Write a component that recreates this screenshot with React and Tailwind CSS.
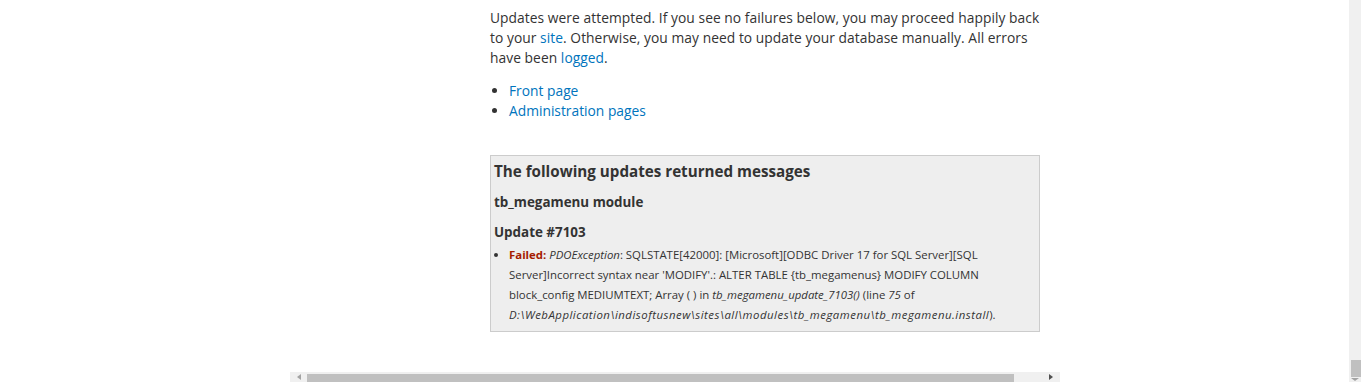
const link = "text-[#0074bd]";

export default function App() {
  return (
    <div className="flex h-[382px] w-full overflow-hidden bg-white font-['Open_Sans',sans-serif] text-[#333]">
      {/* page */}
      <div className="flex min-w-0 flex-1 flex-col">
        <div className="h-[372px] pl-[490px] pt-[8px]">
          <div className="w-[550px]">
            <p className="text-[13.8px] leading-[20px] tracking-[0.05px]">
              Updates were attempted. If you see no failures below, you may proceed happily back to your{" "}
              <a className={link}>site</a>. Otherwise, you may need to update your database manually. All errors have
              been <a className={link}>logged</a>.
            </p>
            <ul className="mt-[13px] list-disc pl-[19px] text-[13.8px] leading-[20px] marker:text-[#333]">
              <li>
                <a className={link}>Front page</a>
              </li>
              <li>
                <a className={link}>Administration pages</a>
              </li>
            </ul>

            <div className="mt-[34px] h-[177px] border border-[#ccc] bg-[#eee] px-[3px]">
              <h3 className="pt-[3px] text-[15.2px] font-bold leading-[24px]">The following updates returned messages</h3>
              <h4 className="mt-[9px] text-[13.4px] font-bold leading-[20px]">tb_megamenu module</h4>
              <h4 className="mt-[10px] text-[13.4px] font-bold leading-[20px]">Update #7103</h4>
              <ul className="mt-[3px] list-disc pl-[15px] text-[11.4px] leading-[20px]">
                <li>
                  <span className="font-bold text-[#a51b00]">Failed:</span> <em>PDOException</em>: SQLSTATE[42000]:
                  [Microsoft][ODBC Driver 17 for SQL Server][SQL Server]Incorrect syntax near 'MODIFY'.: ALTER TABLE
                  {" {tb_megamenus}"} MODIFY COLUMN block_config MEDIUMTEXT; Array ( ) in{" "}
                  <em>tb_megamenu_update_7103()</em> (line <em>75</em> of{" "}
                  <em className="tracking-[0.5px]">
                    D:\WebApplication\indisoftusnew\sites\all\modules\tb_megamenu\tb_megamenu.install
                  </em>
                  ).
                </li>
              </ul>
            </div>
          </div>
        </div>

        {/* horizontal scrollbar */}
        <div className="ml-[290px] flex h-[10px] w-[770px] items-end bg-[#f0f0f0]">
          <div className="flex h-[10px] w-[17px] items-center justify-center">
            <span className="h-0 w-0 border-y-[3px] border-r-[4px] border-y-transparent border-r-[#a3a3a3]" />
          </div>
          <div className="h-[8px] w-[707px] bg-[#c0c0c0]" />
          <div className="flex-1" />
          <div className="flex h-[10px] w-[18px] items-center justify-center">
            <span className="h-0 w-0 border-y-[3px] border-l-[4px] border-y-transparent border-l-[#505050]" />
          </div>
        </div>
      </div>

      {/* vertical scrollbar */}
      <div className="flex h-full w-[12px] flex-col justify-end bg-[#f0f0f0]">
        <div className="ml-[2px] h-[17px] bg-[#c0c0c0]" />
        <div className="flex h-[5px] items-center justify-center">
          <span className="h-0 w-0 border-x-[4px] border-t-[3px] border-x-transparent border-t-[#a3a3a3]" />
        </div>
      </div>
    </div>
  );
}
